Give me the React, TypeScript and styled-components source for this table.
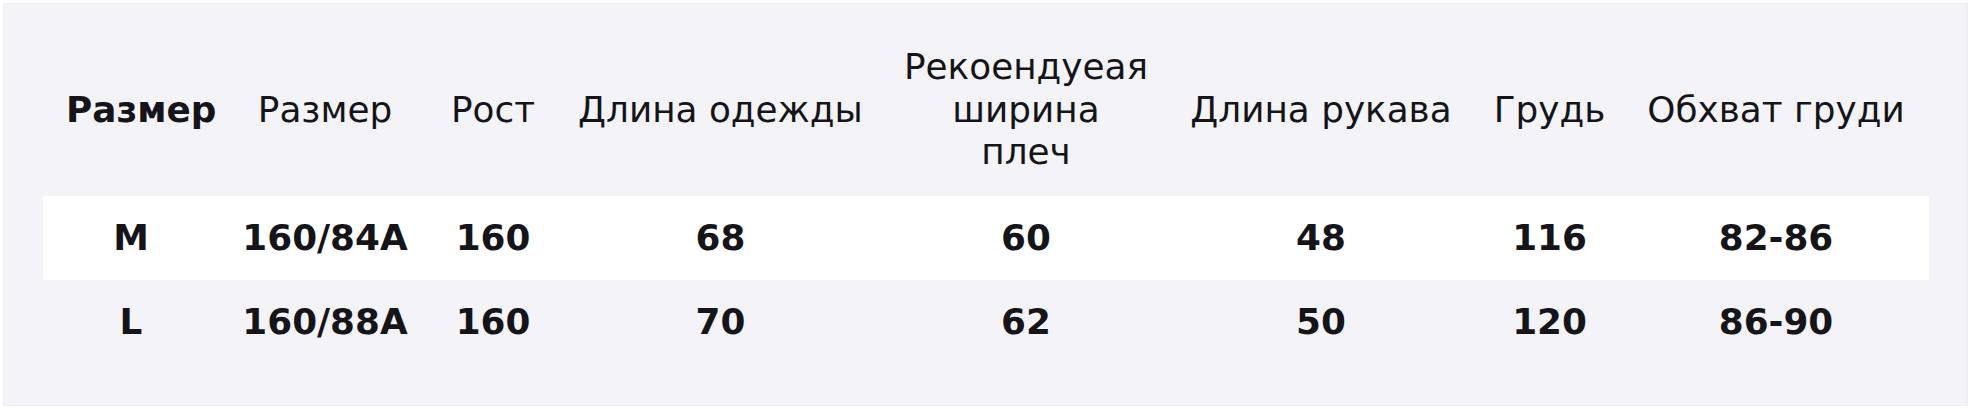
import React from "react"
import styled, { createGlobalStyle } from "styled-components"

const GlobalStyle = createGlobalStyle`
    html, body {
        margin: 0;
        padding: 0;
        background: #ffffff;
    }
    body {
        font-family: "DejaVu Sans", "Liberation Sans", sans-serif;
        color: #141419;
    }
`

type headProps = {
    bold?: boolean,
    wrap?: boolean,
    start?: boolean,
}

type rowProps = {
    striped?: boolean,
}

const Page = styled.div`
    padding: 3px 4px 3px 3px;
`

const Panel = styled.section`
    box-sizing: border-box;
    height: 403px;
    padding: 22px 39px 0 39px;
    background: #f4f4f8;
    border: 1px solid #ededf2;
`

const Table = styled.div`
    display: grid;
    grid-template-columns: 176px 212px 124px 331px 280px 310px 147px 306px;
`

const Row = styled.div<rowProps>`
    display: contents;

    & > * {
        background: ${({ striped }) => (striped ? "#ffffff" : "transparent")};
    }
`

const HeadCell = styled.div<headProps>`
    display: flex;
    align-items: center;
    justify-content: ${({ start }) => (start ? "flex-start" : "center")};
    padding: 20px ${({ wrap }) => (wrap ? "16px" : "23px")} 22.5px;
    font-size: 35.8px;
    line-height: 42.5px;
    font-weight: ${({ bold }) => (bold ? 700 : 400)};
    white-space: ${({ wrap }) => (wrap ? "normal" : "nowrap")};
    text-align: center;

    & > span {
        flex: none;
        max-width: ${({ wrap }) => (wrap ? "100%" : "none")};
    }
`

const Cell = styled.div`
    display: flex;
    align-items: center;
    justify-content: center;
    padding: 20.8px 23px;
    font-size: 35.8px;
    line-height: 42.5px;
    font-weight: 700;
    white-space: nowrap;
    text-align: center;
`

const headers = [
    { label: "Размер", bold: true, start: true },
    { label: "Размер" },
    { label: "Рост" },
    { label: "Длина одежды" },
    { label: "Рекоендуеая ширина плеч", wrap: true },
    { label: "Длина рукава" },
    { label: "Грудь" },
    { label: "Обхват груди" },
]

const rows = [
    ["M", "160/84A", "160", "68", "60", "48", "116", "82-86"],
    ["L", "160/88A", "160", "70", "62", "50", "120", "86-90"],
]

const App = () => {
    return (
        <>
            <GlobalStyle />
            <Page>
                <Panel>
                    <Table>
                        <Row>
                            {headers.map((h, i) => (
                                <HeadCell key={i} bold={h.bold} wrap={h.wrap} start={h.start}>
                                    <span>{h.label}</span>
                                </HeadCell>
                            ))}
                        </Row>
                        {rows.map((r, i) => (
                            <Row key={i} striped={i % 2 === 0}>
                                {r.map((v, j) => (
                                    <Cell key={j}>{v}</Cell>
                                ))}
                            </Row>
                        ))}
                    </Table>
                </Panel>
            </Page>
        </>
    )
}

export default App
